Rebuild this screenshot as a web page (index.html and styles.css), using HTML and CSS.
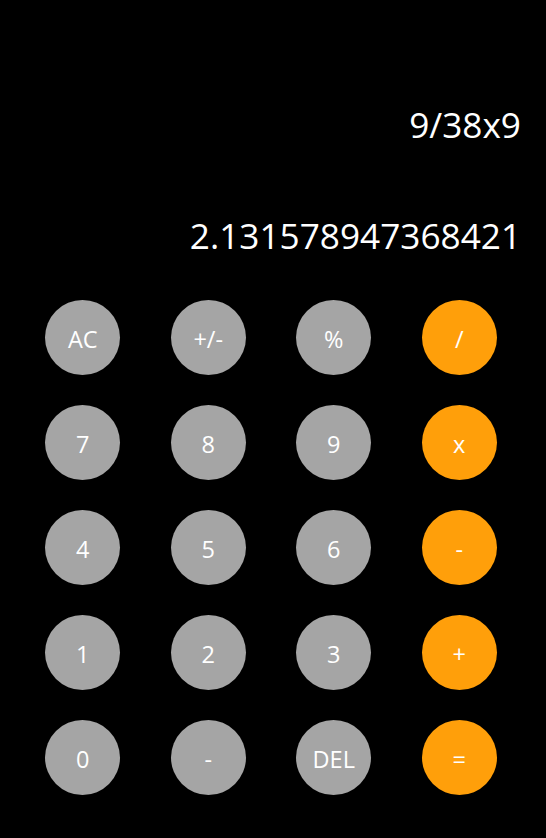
FILE: index.html
```html
<!DOCTYPE html>
<html lang="en">
<head>
<meta charset="utf-8">
<title>Calculator</title>
<link rel="stylesheet" href="styles.css">
</head>
<body>
<main class="calc">
  <section class="display">
    <div class="expr">9/38x9</div>
    <div class="result">2.131578947368421</div>
  </section>
  <section class="keypad">
    <button class="key gray">AC</button>
    <button class="key gray">+/-</button>
    <button class="key gray">%</button>
    <button class="key orange">/</button>
    <button class="key gray">7</button>
    <button class="key gray">8</button>
    <button class="key gray">9</button>
    <button class="key orange">x</button>
    <button class="key gray">4</button>
    <button class="key gray">5</button>
    <button class="key gray">6</button>
    <button class="key orange">-</button>
    <button class="key gray">1</button>
    <button class="key gray">2</button>
    <button class="key gray">3</button>
    <button class="key orange">+</button>
    <button class="key gray">0</button>
    <button class="key gray">-</button>
    <button class="key gray">DEL</button>
    <button class="key orange">=</button>
  </section>
</main>
</body>
</html>
```
FILE: styles.css
```css
html, body {
  margin: 0;
  padding: 0;
  background: #000;
}
.calc {
  width: 546px;
  height: 838px;
  background: #000;
  font-family: "Open Sans", "Noto Sans", sans-serif;
  color: #fff;
  display: flex;
  flex-direction: column;
}
.display {
  padding: 100px 25px 0 0;
  display: flex;
  flex-direction: column;
  align-items: flex-end;
  gap: 63px;
}
.expr, .result {
  font-size: 35.2px;
  line-height: 48px;
  height: 48px;
  white-space: nowrap;
}
.keypad {
  margin-top: 41px;
  padding: 0 24px 0 20px;
  display: grid;
  grid-template-columns: repeat(4, 1fr);
  grid-auto-rows: 75px;
  row-gap: 30px;
}
.key {
  justify-self: center;
  width: 75px;
  height: 75px;
  border: none;
  border-radius: 50%;
  padding: 0;
  margin: 0;
  font-family: "Open Sans", "Noto Sans", sans-serif;
  font-size: 23.5px;
  color: #fff;
  display: flex;
  align-items: center;
  justify-content: center;
  padding-top: 2px;
}
.gray {
  background: #a5a5a5;
}
.orange {
  background: #ff9f0a;
}
```
